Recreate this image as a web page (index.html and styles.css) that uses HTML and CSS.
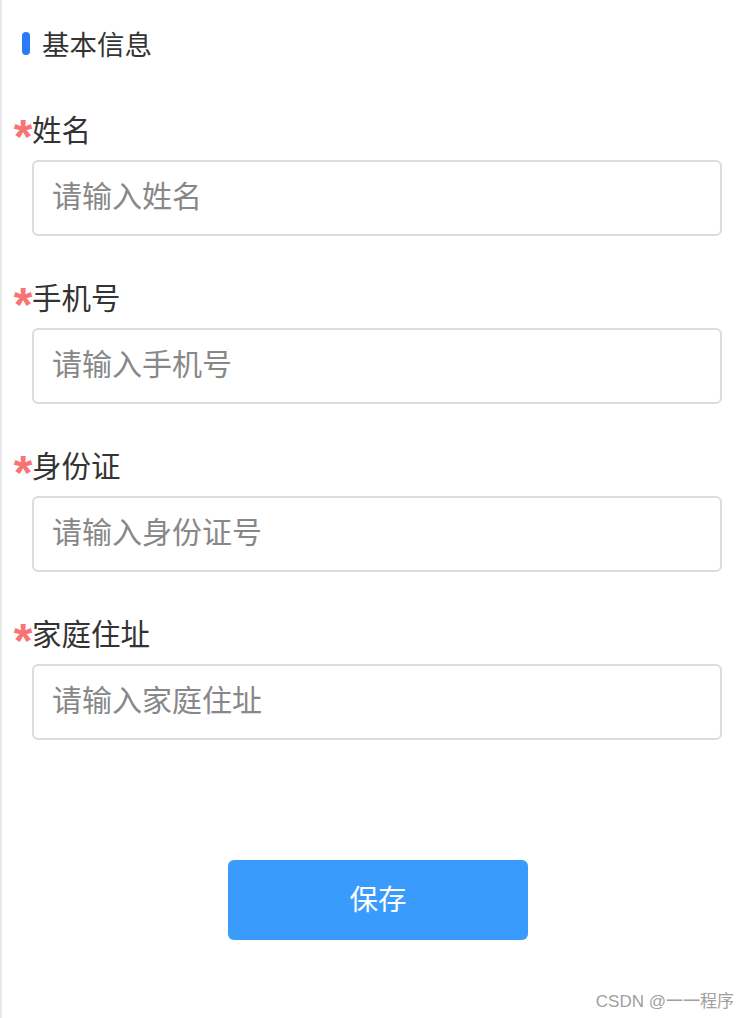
FILE: index.html
```
<!DOCTYPE html>
<html>
<head lang="zh">
    <meta charset="UTF-8">
    <title>基本信息</title>
    <link rel="stylesheet" href="styles.css">
</head>
<body>
<div class="page">
    <div class="sectionTitle">
        <span class="bar"></span>
        <span class="titleText">基本信息</span>
    </div>
    <div class="formGroup">
        <div class="formItem">
            <div class="label"><span class="star">*</span>姓名</div>
            <input class="field" type="text" placeholder="请输入姓名">
        </div>
        <div class="formItem">
            <div class="label"><span class="star">*</span>手机号</div>
            <input class="field" type="text" placeholder="请输入手机号">
        </div>
        <div class="formItem">
            <div class="label"><span class="star">*</span>身份证</div>
            <input class="field" type="text" placeholder="请输入身份证号">
        </div>
        <div class="formItem">
            <div class="label"><span class="star">*</span>家庭住址</div>
            <input class="field" type="text" placeholder="请输入家庭住址">
        </div>
    </div>
    <div class="btnWrap">
        <button class="saveBtn">保存</button>
    </div>
    <div class="mark">CSDN @一一程序</div>
</div>
</body>
</html>
```

FILE: styles.css
```
*{
    margin: 0;
    padding: 0;
    box-sizing: border-box;
}
body{
    font-family: "Noto Sans CJK SC", "Noto Sans", sans-serif;
    background: #fff;
    color: #333;
}
.page{
    height: 1018px;
    border-left: 2px solid #e9e9e9;
    position: relative;
}
.sectionTitle{
    display: flex;
    align-items: center;
    padding: 24px 0 0 20px;
    height: 62px;
}
.sectionTitle .bar{
    width: 8px;
    height: 23px;
    border-radius: 4px;
    background-color: #2a7bf6;
    margin-right: 12px;
}
.sectionTitle .titleText{
    font-size: 27.5px;
    line-height: 36px;
    color: #333;
}
.formGroup{
    padding-top: 48px;
}
.formItem{
    margin-bottom: 42px;
}
.formItem .label{
    display: flex;
    align-items: center;
    height: 40px;
    padding-bottom: 4px;
    font-size: 29.5px;
    color: #333;
    padding-left: 11px;
    margin-bottom: 10px;
}
.formItem .star{
    color: #f77474;
    font-family: "Liberation Sans", sans-serif;
    font-weight: bold;
    font-size: 48px;
    line-height: 40px;
    margin-top: 18px;
    width: 20px;
    margin-right: -1px;
    text-align: center;
}
.field{
    display: block;
    margin-left: 30px;
    width: 690px;
    height: 76px;
    border: 2px solid #dcdcdf;
    border-radius: 6px;
    padding: 0 18px 8px;
    font-size: 30px;
    font-family: "Noto Sans CJK SC", sans-serif;
    color: #333;
    outline: none;
}
.field::placeholder{
    color: #888;
}
.btnWrap{
    display: flex;
    justify-content: center;
    padding-top: 78px;
    padding-left: 6px;
}
.saveBtn{
    width: 300px;
    height: 80px;
    padding-bottom: 5px;
    border: none;
    border-radius: 6px;
    background-color: #399cfc;
    color: #fff;
    font-size: 28.5px;
    font-family: "Noto Sans CJK SC", sans-serif;
}
.mark{
    position: absolute;
    right: 14px;
    bottom: 6px;
    font-size: 17px;
    color: #a0a0a0;
    font-family: "Liberation Sans", "Noto Sans CJK SC", sans-serif;
}
```
